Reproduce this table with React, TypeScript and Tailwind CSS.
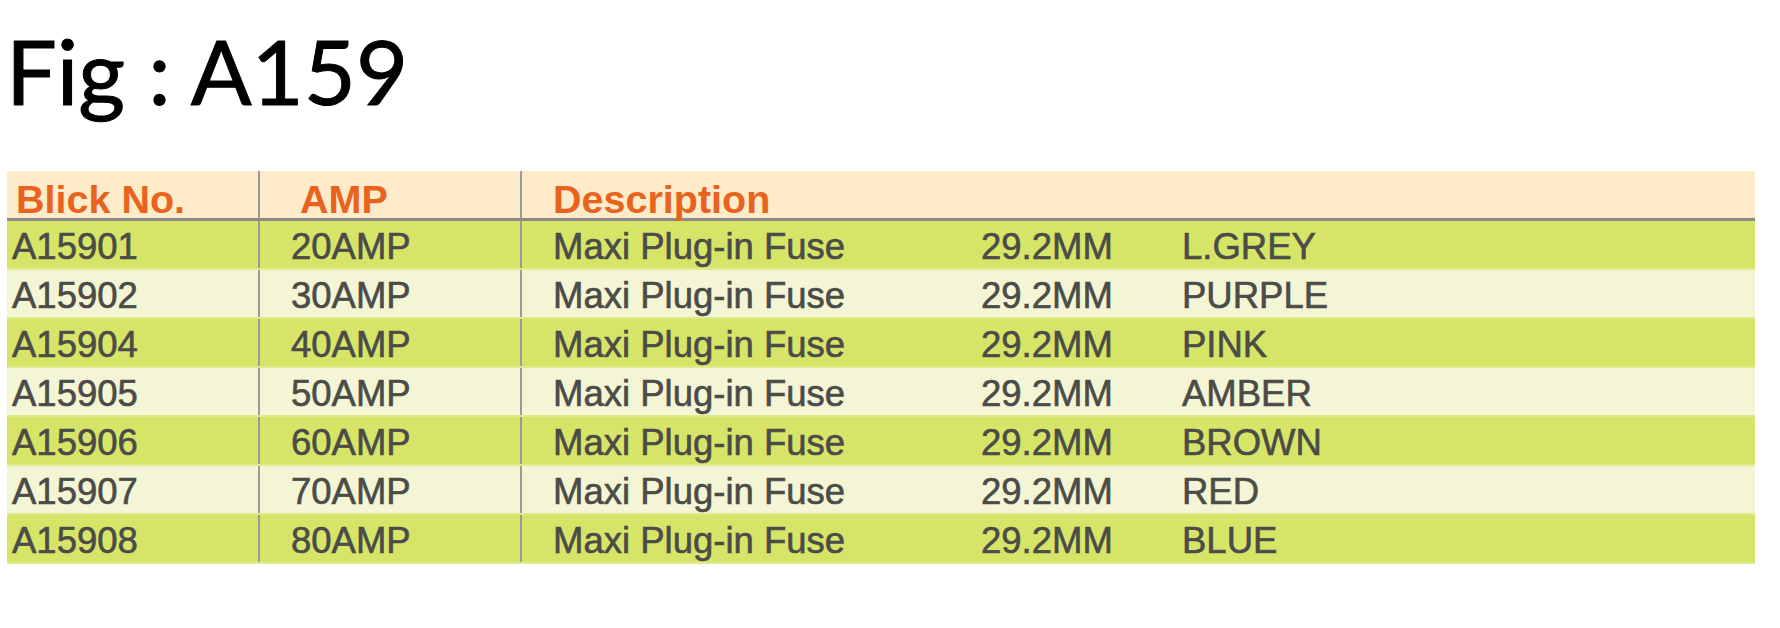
const rows = [
  { no: "A15901", amp: "20AMP", colour: "L.GREY" },
  { no: "A15902", amp: "30AMP", colour: "PURPLE" },
  { no: "A15904", amp: "40AMP", colour: "PINK" },
  { no: "A15905", amp: "50AMP", colour: "AMBER" },
  { no: "A15906", amp: "60AMP", colour: "BROWN" },
  { no: "A15907", amp: "70AMP", colour: "RED" },
  { no: "A15908", amp: "80AMP", colour: "BLUE" },
];

export default function App() {
  return (
    <div className="w-[1780px] h-[628px] bg-white font-['Liberation_Sans',Arial,sans-serif]">
      <h1 className="pl-[6px] pt-[25px] h-[171px] text-[90px] leading-none font-normal text-black font-['Lato',sans-serif] [-webkit-text-stroke:1px_black]">
        Fig : A159
      </h1>

      <div className="ml-[7px] w-[1748px]">
        <div className="flex h-[50px] bg-[#fdebc9] border-b-[3px] border-[#8d8a86] text-[39.5px] font-bold text-[#e8631d] leading-none">
          <div className="w-[253px] shrink-0 border-r-2 border-[#9b9a96] flex items-center pl-[9px] pt-[10px]">
            Blick No.
          </div>
          <div className="w-[262px] shrink-0 border-r-2 border-[#9b9a96] flex items-center pl-[40px] pt-[10px]">
            AMP
          </div>
          <div className="flex-1 flex items-center pl-[31px] pt-[10px]">Description</div>
        </div>

        {rows.map((r, i) => (
          <div
            key={r.no}
            className={
              i % 2 === 0
                ? "flex h-[49px] bg-[#d6e568] border-b-2 border-[#dfea8a] text-[36.5px] text-[#4b4b48] leading-none [-webkit-text-stroke:0.6px_#4b4b48]"
                : "flex h-[49px] bg-[#f4f5d4] border-b-2 border-[#dfea8a] text-[36.5px] text-[#4b4b48] leading-none [-webkit-text-stroke:0.6px_#4b4b48]"
            }
          >
            <div className="w-[253px] shrink-0 border-r-2 border-[#9b9a96] flex items-center pl-[5px] pt-[5px]">
              {r.no}
            </div>
            <div className="w-[262px] shrink-0 border-r-2 border-[#9b9a96] flex items-center pl-[31px] pt-[5px]">
              {r.amp}
            </div>
            <div className="flex-1 flex items-center pl-[31px] pt-[5px]">
              <span className="w-[428px] shrink-0">Maxi Plug-in Fuse</span>
              <span className="w-[201px] shrink-0">29.2MM</span>
              <span>{r.colour}</span>
            </div>
          </div>
        ))}
      </div>
    </div>
  );
}
